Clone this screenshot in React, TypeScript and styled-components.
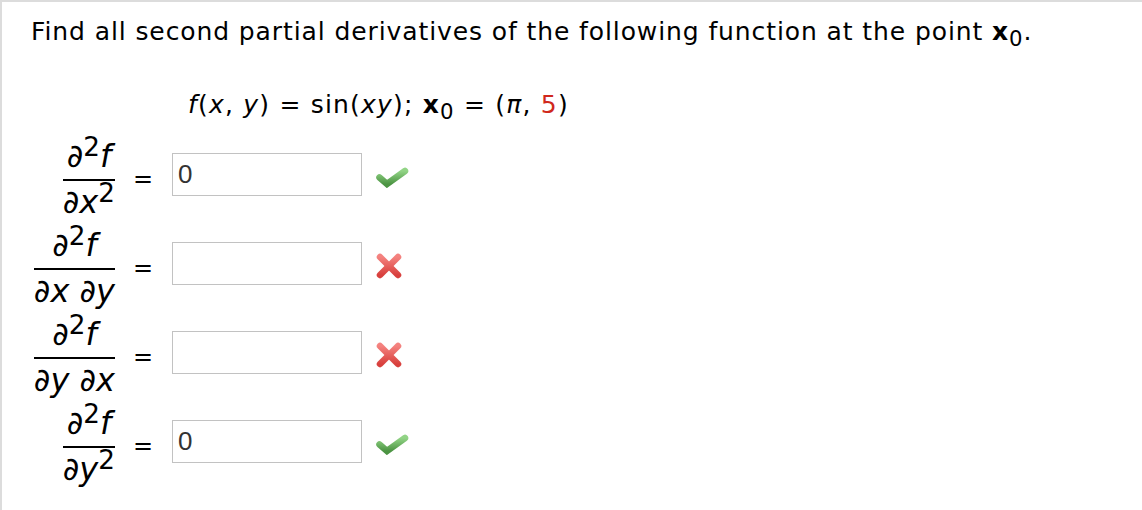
import React from "react";
import styled, { createGlobalStyle } from "styled-components";

const Global = createGlobalStyle`
  html, body { margin: 0; padding: 0; background: #fff; }
  body { font-family: "DejaVu Sans", Verdana, sans-serif; color: #000; }
`;

const Page = styled.div`
  width: 1142px;
  height: 510px;
  box-sizing: border-box;
  border-top: 2px solid #dcdcdc;
  border-left: 2px solid #dcdcdc;
  padding: 15px 0 0 29px;
  overflow: hidden;
`;

const Title = styled.div`
  font-size: 25px;
  letter-spacing: 0.9px;
  line-height: 30px;
  white-space: nowrap;
`;

const Sub = styled.sub`
  font-size: 0.85em;
  line-height: 0;
  vertical-align: -0.3em;
  font-weight: normal;
`;

const Bold = styled.b`
  font-weight: bold;
`;

const Formula = styled.div`
  margin: 43px 0 0 157px;
  font-size: 25px;
  letter-spacing: 1.2px;
  line-height: 30px;
  white-space: nowrap;
`;

const Red = styled.span`
  color: #d0281c;
`;

const Rows = styled.div`
  margin-top: 12px;
  display: grid;
  grid-template-columns: 84px 57px 203px auto;
  grid-auto-rows: 89px;
  align-items: center;
`;

const FracCell = styled.div`
  display: flex;
  justify-content: flex-end;
`;

const Frac = styled.div`
  display: inline-flex;
  flex-direction: column;
  align-items: stretch;
  font-size: 32px;
  font-style: italic;
  text-align: center;
  margin-top: -2px;
`;

const Num = styled.div`
  line-height: 34px;
  padding: 3px 0 6px;
  white-space: nowrap;
`;

const Bar = styled.div`
  height: 2px;
  background: #000;
`;

const Den = styled.div`
  line-height: 28px;
  padding: 7px 0 0;
  white-space: nowrap;
`;

const Sup = styled.sup`
  font-size: 0.82em;
  line-height: 0;
  vertical-align: 0.42em;
  font-style: normal;
`;

const Eq = styled.div`
  font-size: 24px;
  padding-left: 18px;
  margin-top: 4px;
  line-height: 24px;
`;

const Input = styled.input`
  box-sizing: border-box;
  width: 190px;
  height: 43px;
  border: 1px solid #c2c2c2;
  padding: 0 5px;
  font-family: "Liberation Sans", Arial, sans-serif;
  font-size: 26px;
  color: #333;
  background: #fff;
  outline: none;
  margin-top: -4px;
`;

const Mark = styled.div`
  display: flex;
  align-items: center;
  svg {
    flex: none;
  }
`;

const Check = () => (
  <svg width="34" height="22" viewBox="0 0 34 22">
    <defs>
      <linearGradient id="cg" x1="0" y1="0" x2="0" y2="1">
        <stop offset="0" stopColor="#92d486" />
        <stop offset="1" stopColor="#4c9443" />
      </linearGradient>
    </defs>
    <polyline
      points="4.5,11.5 12,18 30,5"
      fill="none"
      stroke="url(#cg)"
      strokeWidth="6.5"
      strokeLinejoin="miter"
      strokeLinecap="round"
    />
  </svg>
);

const Cross = () => (
  <svg width="28" height="28" viewBox="0 0 28 28">
    <defs>
      <linearGradient id="xg" x1="0" y1="0" x2="0" y2="1">
        <stop offset="0" stopColor="#f4827f" />
        <stop offset="1" stopColor="#d8403d" />
      </linearGradient>
    </defs>
    <g stroke="url(#xg)" strokeWidth="6.5" strokeLinecap="round" fill="none">
      <line x1="5" y1="5" x2="23" y2="23" />
      <line x1="23" y1="5" x2="5" y2="23" />
    </g>
  </svg>
);

type RowDef = { num: React.ReactNode; den: React.ReactNode; value: string; ok: boolean };

const rows: RowDef[] = [
  { num: <>∂<Sup>2</Sup>f</>, den: <>∂x<Sup>2</Sup></>, value: "0", ok: true },
  { num: <>∂<Sup>2</Sup>f</>, den: <>∂x ∂y</>, value: "", ok: false },
  { num: <>∂<Sup>2</Sup>f</>, den: <>∂y ∂x</>, value: "", ok: false },
  { num: <>∂<Sup>2</Sup>f</>, den: <>∂y<Sup>2</Sup></>, value: "0", ok: true },
];

export default function App() {
  return (
    <>
      <Global />
      <Page>
        <Title>
          Find all second partial derivatives of the following function at the point <Bold>x</Bold>
          <Sub>0</Sub>.
        </Title>
        <Formula>
          <i>f</i>(<i>x</i>, <i>y</i>) = sin(<i>xy</i>); <Bold>x</Bold>
          <Sub>0</Sub> = (<i>π</i>, <Red>5</Red>)
        </Formula>
        <Rows>
          {rows.map((r, i) => (
            <React.Fragment key={i}>
              <FracCell>
                <Frac>
                  <Num>{r.num}</Num>
                  <Bar />
                  <Den>{r.den}</Den>
                </Frac>
              </FracCell>
              <Eq>=</Eq>
              <div>
                <Input defaultValue={r.value} readOnly />
              </div>
              <Mark>{r.ok ? <Check /> : <Cross />}</Mark>
            </React.Fragment>
          ))}
        </Rows>
      </Page>
    </>
  );
}
